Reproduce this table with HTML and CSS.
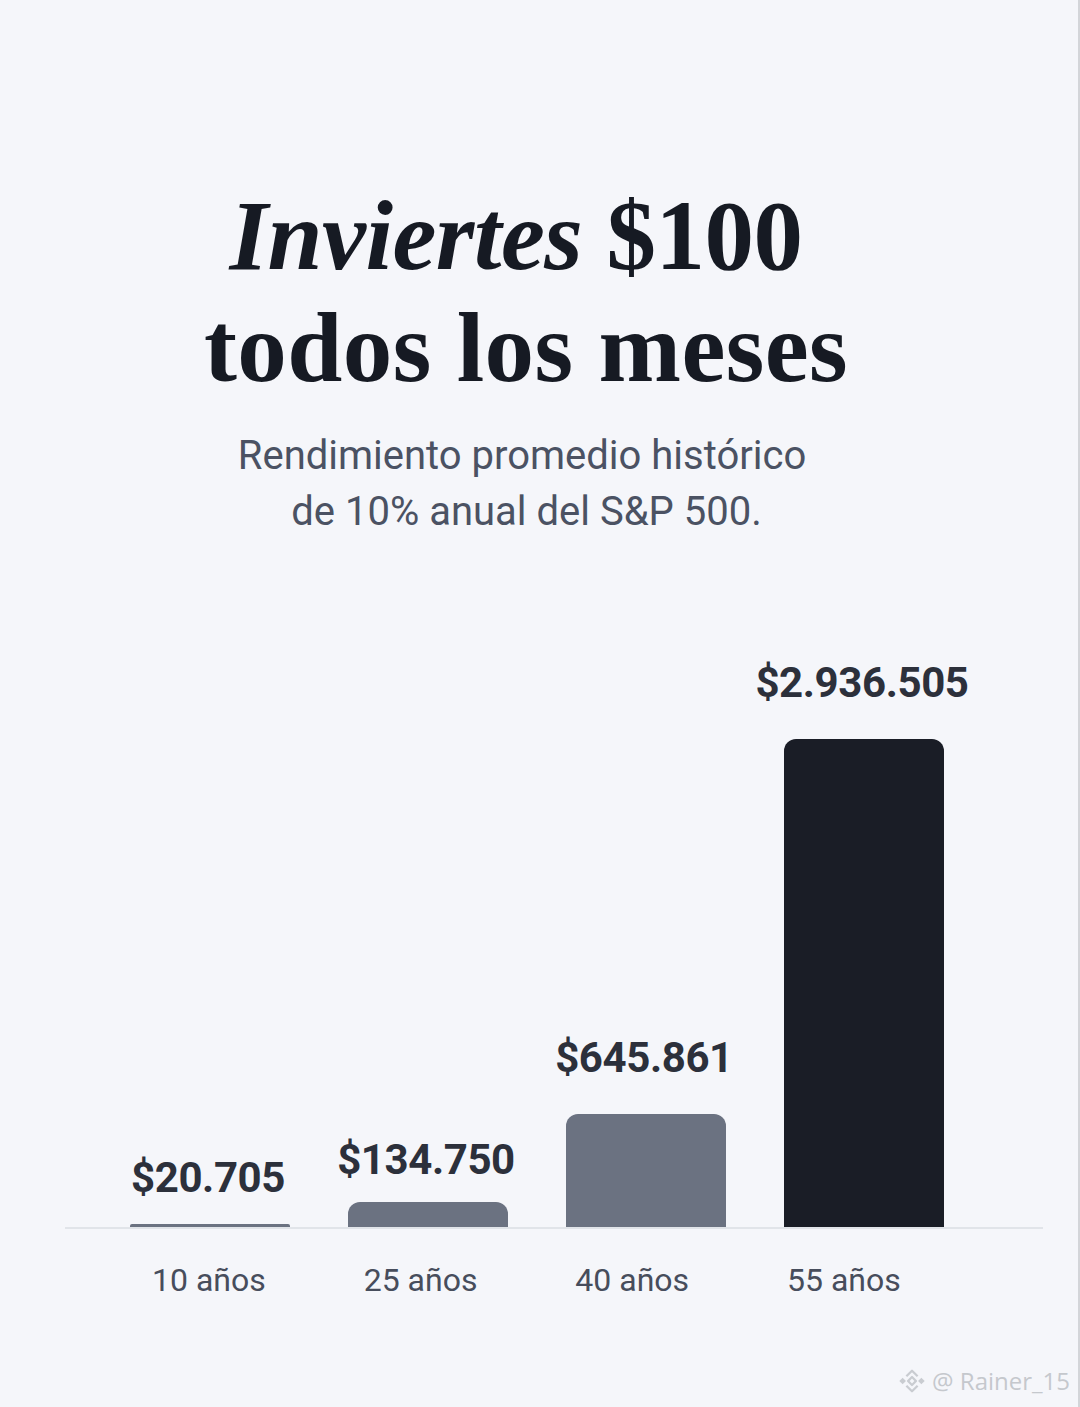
FILE: index.html
```html
<!DOCTYPE html>
<html lang="es">
<head>
<meta charset="utf-8">
<title>Inviertes $100 todos los meses</title>
<link rel="stylesheet" href="styles.css">
</head>
<body>
<div class="page">
  <header class="header">
    <h1 class="title"><span class="title-line title-line--1"><span class="title-italic">Inviertes</span> $100</span><span class="title-line title-line--2">todos los meses</span></h1>
    <p class="subtitle">Rendimiento promedio histórico<br><span class="subtitle-2">de 10% anual del S&amp;P 500.</span></p>
  </header>

  <section class="chart">
    <div class="bars">
      <div class="col col--10">
        <div class="value">$20.705</div>
        <div class="bar bar--gray bar--tiny" style="height:3px"></div>
      </div>
      <div class="col col--25">
        <div class="value">$134.750</div>
        <div class="bar bar--gray" style="height:25px"></div>
      </div>
      <div class="col col--40">
        <div class="value">$645.861</div>
        <div class="bar bar--gray" style="height:113px"></div>
      </div>
      <div class="col col--55">
        <div class="value">$2.936.505</div>
        <div class="bar bar--dark" style="height:488px"></div>
      </div>
    </div>
    <div class="axis"></div>
    <div class="labels">
      <div class="label">10 años</div>
      <div class="label">25 años</div>
      <div class="label">40 años</div>
      <div class="label">55 años</div>
    </div>
  </section>

  <div class="watermark">
    <svg class="wm-logo" viewBox="0 0 32 32" width="30" height="30" aria-hidden="true">
      <g fill="none" stroke="#c9ccd1" stroke-width="2.4" stroke-linejoin="round">
        <path d="M10 11 L16 5 L22 11"/>
        <path d="M10 21 L16 27 L22 21"/>
        <rect x="13" y="13" width="6" height="6" transform="rotate(45 16 16)"/>
      </g>
      <g fill="#c9ccd1">
        <rect x="3.5" y="13.5" width="5" height="5" transform="rotate(45 6 16)"/>
        <rect x="23.5" y="13.5" width="5" height="5" transform="rotate(45 26 16)"/>
      </g>
    </svg>
    <span class="wm-text">@ Rainer_15</span>
  </div>
</div>
</body>
</html>
```

FILE: styles.css
```css
* {
  box-sizing: border-box;
}

html, body {
  margin: 0;
  padding: 0;
  background: #f5f6fa;
}

.page {
  position: relative;
  width: 1080px;
  height: 1407px;
  padding-top: 180px;
  background: #f5f6fa;
  border-right: 2px solid #d3d5d9;
  overflow: hidden;
}

.header {
  width: 1044px;
  text-align: center;
}

.title {
  margin: 0;
  font-family: "Liberation Serif", "Times New Roman", serif;
  font-weight: 700;
  font-size: 99px;
  line-height: 112px;
  color: #161a23;
}

.title-line {
  display: block;
}

.title-line--1 {
  letter-spacing: -0.5px;
  margin-right: 12px;
}

.title-line--2 {
  letter-spacing: 0.4px;
  margin-left: 8px;
}

.title-italic {
  font-style: italic;
}

.subtitle {
  margin: 24px 0 0;
  font-family: Roboto, "Liberation Sans", sans-serif;
  font-weight: 400;
  font-size: 40px;
  line-height: 56px;
  color: #4b5263;
}

.subtitle-2 {
  display: inline-block;
  margin-left: 9px;
}

.chart {
  margin-left: 65px;
  width: 978px;
}

.bars {
  height: 687px;
  display: flex;
  align-items: flex-end;
  padding-left: 36px;
}

.col {
  width: 218px;
  display: flex;
  flex-direction: column;
  align-items: center;
  justify-content: flex-end;
}

.value {
  font-family: Roboto, "Liberation Sans", sans-serif;
  font-weight: 700;
  font-size: 42px;
  line-height: 49px;
  color: #2c303b;
  letter-spacing: -0.4px;
  margin-right: 4px;
}

.col--10 .value { margin-bottom: 22px; }
.col--25 .value { margin-bottom: 18px; }
.col--40 .value { margin-bottom: 32px; }
.col--55 .value { margin-bottom: 32px; }

.bar {
  width: 160px;
  border-radius: 12px 12px 0 0;
}

.bar--tiny {
  border-radius: 2px 2px 0 0;
}

.bar--gray {
  background: #6b7281;
}

.bar--dark {
  background: #1a1d26;
}

.axis {
  height: 2px;
  background: #e1e4e9;
}

.labels {
  display: flex;
  padding-left: 38px;
  margin-top: 33px;
}

.label {
  width: 211.7px;
  text-align: center;
  font-family: Roboto, "Liberation Sans", sans-serif;
  font-weight: 400;
  font-size: 32px;
  line-height: 37px;
  color: #474d5c;
}

.watermark {
  position: absolute;
  right: 8px;
  bottom: 10px;
  display: flex;
  align-items: center;
  gap: 5px;
}

.wm-text {
  font-family: "Open Sans", "DejaVu Sans", sans-serif;
  font-size: 24px;
  line-height: 32px;
  color: #c5c8cd;
}
```
